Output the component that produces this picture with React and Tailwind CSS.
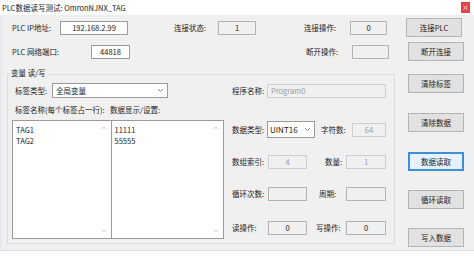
import React from 'react';

const font = "font-['Noto_Sans_CJK_SC',sans-serif]";

const Box = ({ w, children, tone = 'white', className = '' }) => (
    <div
        className={`h-[14px] shrink-0 border flex items-center justify-center text-[7.5px] leading-none ${w} ${
            tone === 'white'
                ? 'bg-white border-[#9a9a9a] text-[#1a1a1a]'
                : tone === 'ro'
                ? 'bg-[#f0f0f0] border-[#b4b4b4] text-[#1a1a1a]'
                : 'bg-[#f0f0f0] border-[#cfcfcf] text-[#9a9a9a]'
        } ${className}`}
    >
        {children}
    </div>
);

const Btn = ({ children, focus, className = '' }) => (
    <div
        className={`w-[56px] h-[19px] shrink-0 flex items-center justify-center text-[7.5px] leading-none text-[#1a1a1a] ${
            focus ? 'bg-[#e5f1fb] border-2 border-[#3c8fd8]' : 'bg-[#e1e1e1] border border-[#b4b4b4]'
        } ${className}`}
    >
        {children}
    </div>
);

const Chevron = () => (
    <svg width="7" height="5" viewBox="0 0 7 5" className="shrink-0">
        <path d="M1 1l2.5 2.5L6 1" fill="none" stroke="#707070" strokeWidth="0.8" />
    </svg>
);

const ScrollArrows = () => (
    <div className="w-[14px] h-full flex flex-col justify-between items-center py-[5px] bg-white">
        <svg width="6" height="4" viewBox="0 0 6 4">
            <path d="M1 3l2-2 2 2" fill="none" stroke="#c0c0c0" strokeWidth="0.8" />
        </svg>
        <svg width="6" height="4" viewBox="0 0 6 4">
            <path d="M1 1l2 2 2-2" fill="none" stroke="#c0c0c0" strokeWidth="0.8" />
        </svg>
    </div>
);

const Label = ({ w, children, className = '' }) => (
    <div className={`shrink-0 text-[7.5px] leading-none text-[#1a1a1a] whitespace-nowrap ${w} ${className}`}>{children}</div>
);

export default function App() {
    return (
        <div className={`w-[474px] h-[256px] bg-white ${font}`}>
            {/* title bar */}
            <div className="h-[15px] bg-white flex items-center justify-between">
                <div className="pl-[2px] text-[7.5px] leading-none text-[#1a1a1a] whitespace-nowrap">PLC数据读写测试: OmronNJNX_TAG</div>
                <div className="w-[9px] h-[11px] mr-[4px] bg-[#e04343] flex items-center justify-center text-white text-[7px] leading-none">×</div>
            </div>

            <div className="h-[236px] bg-[#f0f0f0] border-l-[2px] border-[#e6eaef] border-b border-b-[#dcdcdc]">
                {/* row 1 */}
                <div className="flex items-center h-[19px] pt-[3px] box-content">
                    <Label w="w-[48px]" className="ml-[10px]">PLC IP地址:</Label>
                    <Box w="w-[68px]">192.168.2.99</Box>
                    <Label w="w-[44px]" className="ml-[46px]">连接状态:</Label>
                    <Box w="w-[38px]" tone="ro">1</Box>
                    <Label w="w-[46px]" className="ml-[48px]">连接操作:</Label>
                    <Box w="w-[37px]" tone="ro">0</Box>
                    <Btn className="ml-[19px]">连接PLC</Btn>
                </div>

                {/* row 2 */}
                <div className="flex items-center h-[19px] mt-[5px]">
                    <Label w="w-[79px]" className="ml-[10px]">PLC 网络端口:</Label>
                    <Box w="w-[39px]">44818</Box>
                    <Label w="w-[46px]" className="ml-[176px]">断开操作:</Label>
                    <Box w="w-[37px]" tone="ro" />
                    <Btn className="ml-[19px]">断开连接</Btn>
                </div>

                {/* group + buttons */}
                <div className="flex mt-[13px]">
                    <div className="relative ml-[5px] w-[388px] h-[170px] border border-[#dcdcdc] flex">
                        <div className="absolute -top-[6px] left-[2px] bg-[#f0f0f0] px-[1px] text-[7.5px] leading-none text-[#1a1a1a]">变量 读/写</div>

                        {/* left column */}
                        <div className="ml-[4px] w-[212px] flex flex-col">
                            <div className="flex items-center mt-[8px] h-[15px]">
                                <Label w="w-[37px]" className="ml-[3px]">标签类型:</Label>
                                <div className="w-[116px] h-[15px] bg-white border border-[#9a9a9a] flex items-center justify-between pl-[3px] pr-[3px]">
                                    <span className="text-[7.5px] leading-none text-[#1a1a1a]">全局变量</span>
                                    <Chevron />
                                </div>
                            </div>
                            <div className="flex items-center mt-[7px] h-[10px]">
                                <Label w="w-[95px]" className="ml-[3px]">标签名称(每个标签占一行):</Label>
                                <Label w="w-[80px]">数据显示/设置:</Label>
                            </div>
                            <div className="flex mt-[5px] h-[119px]">
                                <div className="w-[99px] h-full bg-white border border-[#9a9a9a] border-r-0 flex">
                                    <div className="flex-1 pl-[3px] pt-[3px] text-[7.5px] leading-[11px] text-[#1a1a1a]">
                                        <div>TAG1</div>
                                        <div>TAG2</div>
                                    </div>
                                    <ScrollArrows />
                                </div>
                                <div className="w-[114px] h-full bg-white border border-[#9a9a9a] flex">
                                    <div className="flex-1 pl-[3px] pt-[3px] text-[7.5px] leading-[11px] text-[#1a1a1a]">
                                        <div>11111</div>
                                        <div>55555</div>
                                    </div>
                                    <ScrollArrows />
                                </div>
                            </div>
                        </div>

                        {/* right column */}
                        <div className="ml-[8px] flex flex-col">
                            <div className="flex items-center h-[17px] mt-[7px]">
                                <Label w="w-[35px]">程序名称:</Label>
                                <Box w="w-[119px]" tone="dim" className="!justify-start pl-[3px]">Program0</Box>
                            </div>
                            <div className="flex items-center h-[17px] mt-[22px]">
                                <Label w="w-[35px]">数据类型:</Label>
                                <div className="w-[48px] h-[17px] bg-white border border-[#9a9a9a] flex items-center justify-between pl-[2px] pr-[3px]">
                                    <span className="text-[8px] leading-none text-[#1a1a1a]">UINT16</span>
                                    <Chevron />
                                </div>
                                <Label w="w-[31px]" className="ml-[6px]">字符数:</Label>
                                <Box w="w-[34px]" tone="dim">64</Box>
                            </div>
                            <div className="flex items-center h-[17px] mt-[15px]">
                                <Label w="w-[36px]">数组索引:</Label>
                                <Box w="w-[39px]" tone="dim">4</Box>
                                <Label w="w-[21px]" className="ml-[18px]">数量:</Label>
                                <Box w="w-[40px]" tone="dim">1</Box>
                            </div>
                            <div className="flex items-center h-[17px] mt-[15px]">
                                <Label w="w-[36px]">循环次数:</Label>
                                <Box w="w-[39px]" tone="ro" />
                                <Label w="w-[27px]" className="ml-[12px]">周期:</Label>
                                <Box w="w-[40px]" tone="ro" />
                            </div>
                            <div className="flex items-center h-[17px] mt-[17px]">
                                <Label w="w-[36px]">读操作:</Label>
                                <Box w="w-[39px]" tone="ro">0</Box>
                                <Label w="w-[30px]" className="ml-[9px]">写操作:</Label>
                                <Box w="w-[40px]" tone="ro">0</Box>
                            </div>
                        </div>
                    </div>

                    {/* buttons column */}
                    <div className="ml-[13px] flex flex-col">
                        <Btn>清除标签</Btn>
                        <Btn className="mt-[20px]">清除数据</Btn>
                        <Btn focus className="mt-[20px]">数据读取</Btn>
                        <Btn className="mt-[19px]">循环读取</Btn>
                        <Btn className="mt-[19px]">写入数据</Btn>
                    </div>
                </div>
            </div>
        </div>
    );
}
